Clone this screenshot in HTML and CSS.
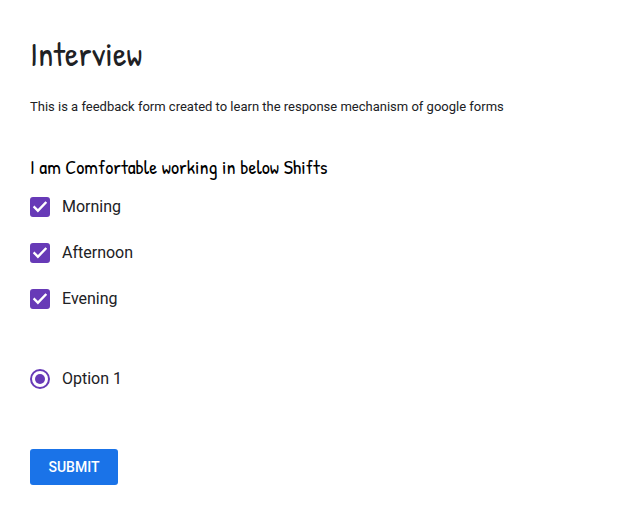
FILE: index.html
```
<!DOCTYPE html>
<html lang="en">
<head>
  <meta charset="UTF-8">
  <meta name="viewport" content="width=device-width, initial-scale=1">
  <title>Interview</title>
  <link rel="stylesheet" href="styles.css">
</head>
<body>
  <form class="form">
    <h1>Interview</h1>
    <p class="description">This is a feedback form created to learn the response mechanism of google forms</p>

    <fieldset class="question">
      <legend>I am Comfortable working in below Shifts</legend>
      <label class="option">
        <input type="checkbox" name="shift" value="Morning" checked>
        <span>Morning</span>
      </label>
      <label class="option">
        <input type="checkbox" name="shift" value="Afternoon" checked>
        <span>Afternoon</span>
      </label>
      <label class="option">
        <input type="checkbox" name="shift" value="Evening" checked>
        <span>Evening</span>
      </label>
    </fieldset>

    <label class="option single">
      <input type="radio" name="choice" value="Option 1" checked>
      <span>Option 1</span>
    </label>

    <button type="submit">SUBMIT</button>
  </form>
</body>
</html>
```

FILE: styles.css
```
body {
  margin: 0;
  background: #fff;
  color: #202124;
  font-family: Roboto, Arial, sans-serif;
}

.form {
  padding: 32px 30px;
}

h1 {
  margin: 0 0 21px;
  font-family: "Patrick Hand", Lato, sans-serif;
  font-size: 34px;
  font-weight: 400;
  line-height: 44px;
}

.description {
  margin: 0 0 38px;
  font-size: 13px;
  line-height: 20px;
}

.question {
  margin: 0;
  padding: 0;
  border: 0;
}

legend {
  padding: 0;
  margin-bottom: 5px;
  color: #000;
  font-family: "Patrick Hand", Lato, sans-serif;
  font-size: 20px;
  line-height: 24px;
}

.option {
  display: flex;
  align-items: center;
  gap: 12px;
  min-height: 46px;
  font-size: 16px;
  line-height: 24px;
  cursor: pointer;
}

.option input {
  appearance: none;
  display: grid;
  place-items: center;
  box-sizing: border-box;
  width: 20px;
  height: 20px;
  margin: 0;
  border: 2px solid #673ab7;
  border-radius: 3px;
}

.option input[type="checkbox"]:checked {
  background: #673ab7;
}

/* tick */
.option input[type="checkbox"]:checked::before {
  content: "";
  width: 16px;
  height: 16px;
  background: #fff;
  clip-path: polygon(5% 51%, 15% 40%, 37% 62%, 84% 14%, 95% 24%, 37% 84%);
}

.option input[type="radio"] {
  border-radius: 50%;
}

.option input[type="radio"]:checked::before {
  content: "";
  width: 10px;
  height: 10px;
  border-radius: 50%;
  background: #673ab7;
}

.single {
  margin-top: 34px;
  margin-bottom: 47px;
}

button {
  min-width: 88px;
  height: 36px;
  padding: 0 18px;
  border: 0;
  border-radius: 3px;
  background: #1a73e8;
  color: #fff;
  font-family: Roboto, Arial, sans-serif;
  font-size: 14px;
  font-weight: 500;
  cursor: pointer;
}

button:hover {
  background: #1765cc;
}
```
